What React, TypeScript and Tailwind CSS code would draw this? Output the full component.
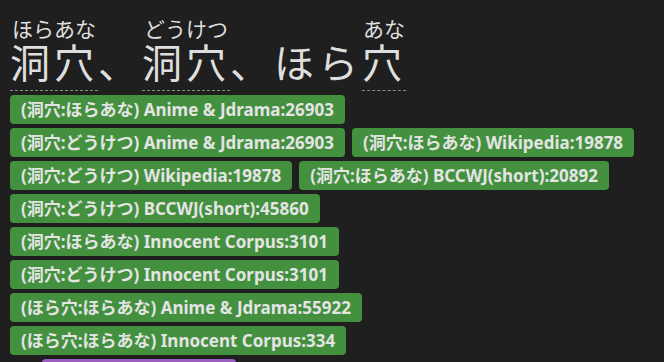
import React from 'react';

const tags: string[] = [
  '(洞穴:ほらあな) Anime & Jdrama:26903',
  '(洞穴:どうけつ) Anime & Jdrama:26903',
  '(洞穴:ほらあな) Wikipedia:19878',
  '(洞穴:どうけつ) Wikipedia:19878',
  '(洞穴:ほらあな) BCCWJ(short):20892',
  '(洞穴:どうけつ) BCCWJ(short):45860',
  '(洞穴:ほらあな) Innocent Corpus:3101',
  '(洞穴:どうけつ) Innocent Corpus:3101',
  '(ほら穴:ほらあな) Anime & Jdrama:55922',
  '(ほら穴:ほらあな) Innocent Corpus:334',
];

function Ruby({ base, reading }: { base: string; reading: string }) {
  return (
    <span className="inline-flex flex-col items-center">
      <span className="text-[21px] leading-[22px]">{reading}</span>
      <span className="mt-[3px] border-b border-dashed border-[#8a8a8a] pb-[7px] text-[40px] leading-[40px] tracking-[4px]">{base}</span>
    </span>
  );
}

export default function App() {
  return (
    <div className="min-h-screen overflow-hidden bg-[#1f1f1f] px-[10px] pt-[18px] font-['Noto_Sans','Noto_Sans_CJK_JP',sans-serif] text-[#dedede]">
      {/* 見出し */}
      <div className="flex items-end">
        <Ruby base="洞穴" reading="ほらあな" />
        <span className="pb-[8px] text-[40px] leading-[40px] tracking-[4px]">、</span>
        <Ruby base="洞穴" reading="どうけつ" />
        <span className="pb-[8px] text-[40px] leading-[40px] tracking-[4px]">、</span>
        <span className="pb-[8px] text-[40px] leading-[40px] tracking-[4px]">ほら</span>
        <Ruby base="穴" reading="あな" />
      </div>

      {/* 頻度タグ */}
      <div className="mt-[4px] flex flex-wrap gap-x-[7px] gap-y-[4px] pr-[10px]">
        {tags.map((t) => (
          <span
            key={t}
            className="flex h-[29px] items-center rounded-[4px] bg-[#43903f] px-[11px] pt-[1px] text-[17px] font-bold text-[#e4e4e4]"
          >
            {t}
          </span>
        ))}
      </div>
      <div className="ml-[32px] mt-[4px] h-[20px] w-[194px] rounded-[4px] bg-[#9a5fc0]" />
    </div>
  );
}
